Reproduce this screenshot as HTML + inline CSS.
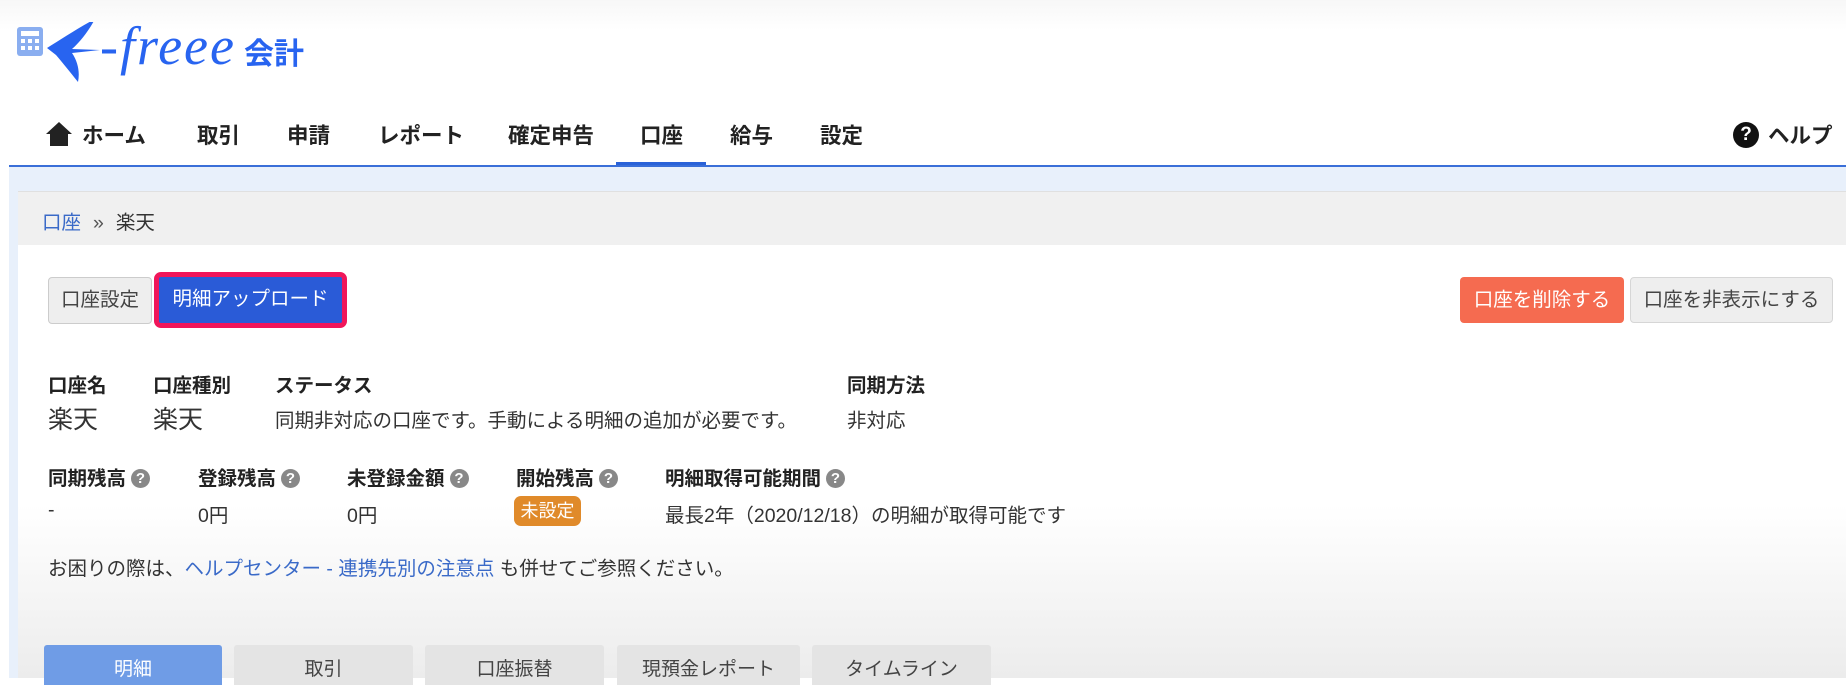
<!DOCTYPE html>
<html><head><meta charset="utf-8"><style>
*{margin:0;padding:0;box-sizing:border-box}
body{width:1846px;height:678px;overflow:hidden;position:relative;background:#fff;font-family:"Liberation Sans","Noto Sans CJK JP",sans-serif;color:#333}
.a{position:absolute;white-space:nowrap}
.nav{font-size:21.5px;font-weight:bold;color:#222;top:119px}
.lbl{font-weight:bold;font-size:19.5px;color:#222}
.q{display:inline-block;width:19px;height:19px;border-radius:50%;background:#888;color:#fff;font-size:15px;text-align:center;line-height:19px;vertical-align:2px;margin-left:5px}
.btn{position:absolute;border-radius:4px;font-size:19.5px;text-align:center}
.tab{position:absolute;top:645px;height:40px;background:#e4e4e4;border-radius:3px 3px 0 0;text-align:center;font-size:19px;color:#444;padding-top:9px}
.t{font-size:19.5px}
</style></head><body>
<div class="a" style="left:0;top:0;width:1846px;height:166px;background:linear-gradient(#f7f7f7,#fff 30px)"></div>
<svg class="a" style="left:15px;top:22px" width="300" height="65" viewBox="15 22 300 65">
<rect x="17" y="27" width="26" height="29" rx="3" fill="#8aaef0"/>
<g fill="#fff"><rect x="21" y="31" width="18" height="5"/>
<rect x="21" y="39" width="4" height="4"/><rect x="28" y="39" width="4" height="4"/><rect x="35" y="39" width="4" height="4"/>
<rect x="21" y="46" width="4" height="4"/><rect x="28" y="46" width="4" height="4"/><rect x="35" y="46" width="4" height="4"/></g>
<path d="M47 48 C60 40 78 28 95 19 C88 32 80 42 72 49 L100 50 L72 53 C78 62 80 72 78 82 C70 72 62 62 56 55 Z" fill="#2864f0"/>
<text x="100" y="64" font-family="Liberation Serif,serif" font-style="italic" font-size="54" fill="#2864f0" textLength="134">-freee</text>
<text x="244" y="64" font-family="Noto Sans CJK JP,sans-serif" font-size="30" font-weight="bold" fill="#2864f0">会計</text>
</svg>
<svg class="a" style="left:45px;top:121px" width="28" height="26" viewBox="0 0 28 26"><path d="M14 1 L27 13 L23 13 L23 25 L5 25 L5 13 L1 13 Z" fill="#222"/></svg>
<div class="a nav" style="left:82px">ホーム</div>
<div class="a nav" style="left:197px">取引</div>
<div class="a nav" style="left:287px">申請</div>
<div class="a nav" style="left:378px">レポート</div>
<div class="a nav" style="left:508px">確定申告</div>
<div class="a nav" style="left:640px">口座</div>
<div class="a nav" style="left:730px">給与</div>
<div class="a nav" style="left:820px">設定</div>
<div class="a" style="left:616px;top:162px;width:90px;height:4px;background:#2a62d8"></div>
<div class="a" style="left:1733px;top:122px;width:26px;height:26px;border-radius:50%;background:#111;color:#fff;font-weight:bold;font-size:19px;text-align:center;line-height:26px">?</div>
<div class="a nav" style="left:1768px">ヘルプ</div>
<div class="a" style="left:9px;top:165px;width:1837px;height:2px;background:#3a6fd8"></div>
<div class="a" style="left:9px;top:167px;width:1837px;height:511px;background:#e8f0fb"></div>
<div class="a" style="left:18px;top:191px;width:1828px;height:54px;background:#f0f0f0;border-top:1px solid #e0e0e0"></div>
<div class="a" style="left:18px;top:245px;width:1828px;height:433px;background:linear-gradient(#fff 0,#fff 260px,#ececec 433px)"></div>
<div class="a" style="left:42px;top:206px;font-size:19.5px"><span style="color:#3a6ac8">口座</span><span style="margin:0 0 0 12px;color:#555">»</span><span style="margin-left:12px">楽天</span></div>
<div class="btn" style="left:48px;top:277px;width:104px;height:47px;background:#eee;border:1px solid #ccc;line-height:45px;color:#444">口座設定</div>
<div class="btn" style="left:154px;top:272px;width:193px;height:56px;background:#2a5bd7;border:5px solid #f0165a;border-radius:7px;color:#fff;line-height:44px">明細アップロード</div>
<div class="btn" style="left:1460px;top:277px;width:164px;height:46px;background:#f56b50;color:#fff;line-height:46px">口座を削除する</div>
<div class="btn" style="left:1630px;top:277px;width:203px;height:46px;background:#eee;border:1px solid #d6d6d6;line-height:44px;color:#444">口座を非表示にする</div>
<div class="a lbl" style="left:48px;top:369px">口座名</div>
<div class="a lbl" style="left:153px;top:369px">口座種別</div>
<div class="a lbl" style="left:275px;top:369px">ステータス</div>
<div class="a lbl" style="left:847px;top:369px">同期方法</div>
<div class="a" style="left:48px;top:400px;font-size:25px">楽天</div>
<div class="a" style="left:153px;top:400px;font-size:25px">楽天</div>
<div class="a t" style="left:275px;top:404px">同期非対応の口座です。手動による明細の追加が必要です。</div>
<div class="a t" style="left:847px;top:404px">非対応</div>
<div class="a lbl" style="left:48px;top:462px">同期残高<span class="q">?</span></div>
<div class="a lbl" style="left:198px;top:462px">登録残高<span class="q">?</span></div>
<div class="a lbl" style="left:347px;top:462px">未登録金額<span class="q">?</span></div>
<div class="a lbl" style="left:516px;top:462px">開始残高<span class="q">?</span></div>
<div class="a lbl" style="left:665px;top:462px">明細取得可能期間<span class="q">?</span></div>
<div class="a t" style="left:48px;top:499px">-</div>
<div class="a t" style="left:198px;top:499px">0円</div>
<div class="a t" style="left:347px;top:499px">0円</div>
<div class="a" style="left:514px;top:496px;width:67px;height:30px;border-radius:7px;background:#e08a2a;color:#fff;font-size:18px;text-align:center;line-height:30px">未設定</div>
<div class="a t" style="left:665px;top:499px">最長2年（2020/12/18）の明細が取得可能です</div>
<div class="a t" style="left:48px;top:552px">お困りの際は、<span style="color:#3a6ac8">ヘルプセンター - 連携先別の注意点</span> も併せてご参照ください。</div>
<div class="tab" style="left:44px;width:178px;background:#6f9ce6;color:#fff">明細</div>
<div class="tab" style="left:234px;width:179px">取引</div>
<div class="tab" style="left:425px;width:179px">口座振替</div>
<div class="tab" style="left:617px;width:183px">現預金レポート</div>
<div class="tab" style="left:812px;width:179px">タイムライン</div>
</body></html>
